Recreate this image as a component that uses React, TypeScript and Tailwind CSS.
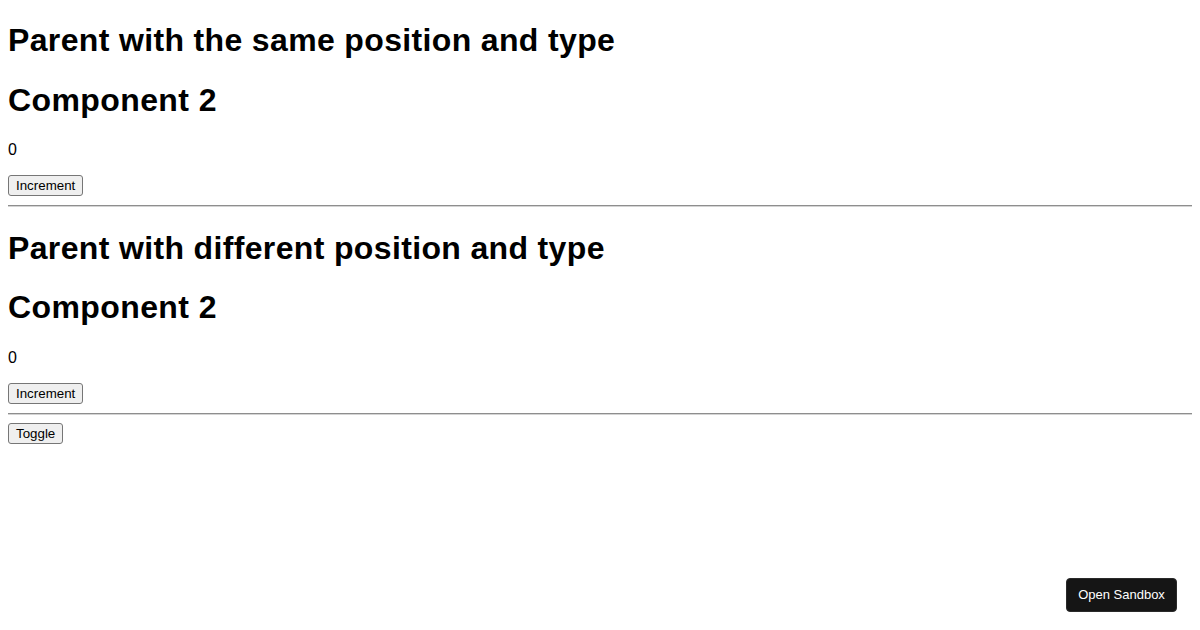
import React, { useState } from 'react';

const Btn: React.FC<{ label: string; onClick?: () => void }> = ({ label, onClick }) => (
  <button
    onClick={onClick}
    className="h-[21px] px-[7px] bg-[#efefef] border border-[#767676] rounded-[3px] text-[13.33px] leading-[normal] text-black"
  >
    {label}
  </button>
);

const Counter: React.FC = () => {
  const [count, setCount] = useState(0);
  return (
    <div>
      <h1 className="text-[32px] font-bold leading-[38px] tracking-[0.4px] my-[21.44px]">Component 2</h1>
      <p className="text-base leading-[19px] my-4">{count}</p>
      <div className="mt-[15px] flex">
        <Btn label="Increment" onClick={() => setCount((c) => c + 1)} />
      </div>
    </div>
  );
};

const Rule: React.FC = () => (
  <div className="mt-[9px] mb-2 h-[2px] border-t border-b border-t-[#8e8e8e] border-b-[#d4d4d4]" />
);

const App: React.FC = () => {
  const [flag, setFlag] = useState(false);
  return (
    <div className="min-h-screen bg-white text-black font-['Liberation_Sans',Arial,sans-serif] px-2 flow-root">
      <h1 className="text-[32px] font-bold leading-[38px] tracking-[0.35px] my-[21.44px]">Parent with the same position and type</h1>
      <Counter />
      <Rule />
      <h1 className="text-[32px] font-bold leading-[38px] tracking-[0.35px] my-[21.44px]">Parent with different position and type</h1>
      <Counter />
      <Rule />
      <div className="flex">
        <Btn label="Toggle" onClick={() => setFlag(!flag)} />
      </div>

      <button className="fixed right-[23px] bottom-[18px] w-[111px] h-[34px] rounded-[4px] bg-[#151515] border border-[#2a2a2a] text-white text-[13px] font-['Liberation_Sans',Arial,sans-serif]">
        Open Sandbox
      </button>
    </div>
  );
};

export default App;
